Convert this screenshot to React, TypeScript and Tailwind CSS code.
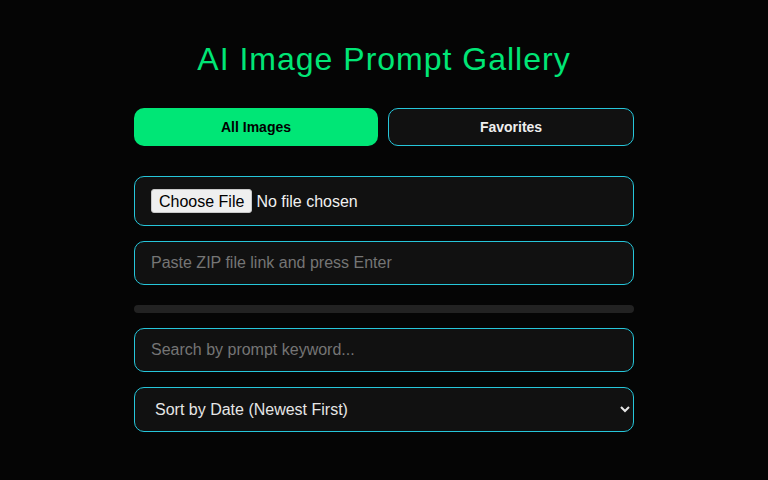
import React, { useState } from 'react';

// Simple gallery control panel: tabs, upload, link, progress, search and sort
export default function App() {
  const [tab, setTab] = useState<'all' | 'fav'>('all');
  const [query, setQuery] = useState('');
  const [link, setLink] = useState('');
  const [sort, setSort] = useState('date-desc');

  const box =
    'w-full rounded-[10px] border border-[#26c6da] bg-[#111111] text-[16px] text-[#e6e6e6] outline-none';

  return (
    <div
      className="min-h-[480px] bg-[#050505] flex flex-col items-center pt-[41px]"
      style={{ fontFamily: '"Liberation Sans", Arial, sans-serif' }}
    >
      <h1 className="text-[32px] leading-[37px] tracking-[1px] text-[#00e676] font-normal">
        AI Image Prompt Gallery
      </h1>

      <div className="w-[500px] mt-[30px] flex flex-col">
        {/* tabs */}
        <div className="flex gap-[10px]">
          <button
            onClick={() => setTab('all')}
            className={`flex-1 h-[38px] rounded-[10px] text-[14px] font-bold ${
              tab === 'all'
                ? 'bg-[#00e676] text-black'
                : 'bg-[#111111] text-[#eeeeee] border border-[#26c6da]'
            }`}
          >
            All Images
          </button>
          <button
            onClick={() => setTab('fav')}
            className={`flex-1 h-[38px] rounded-[10px] text-[14px] font-bold ${
              tab === 'fav'
                ? 'bg-[#00e676] text-black'
                : 'bg-[#111111] text-[#eeeeee] border border-[#26c6da]'
            }`}
          >
            Favorites
          </button>
        </div>

        {/* upload */}
        <div className={`${box} mt-[30px] h-[50px] px-4 flex items-center`}>
          <input
            type="file"
            accept=".zip"
            className="text-[16px] text-[#f0f0f0] file:bg-[#efefef] file:text-black file:border file:border-[#c8c8c8] file:rounded-[3px] file:px-[7px] file:h-[24px] file:mr-[4px]"
          />
        </div>

        <input
          value={link}
          onChange={(e) => setLink(e.target.value)}
          placeholder="Paste ZIP file link and press Enter"
          className={`${box} mt-[15px] h-[44px] px-4 placeholder:text-[#757575]`}
        />

        {/* progress */}
        <div className="mt-[20px] h-[8px] w-full rounded-full bg-[#222222] overflow-hidden">
          <div className="h-full bg-[#00e676]" style={{ width: '0%' }} />
        </div>

        <input
          value={query}
          onChange={(e) => setQuery(e.target.value)}
          placeholder="Search by prompt keyword..."
          className={`${box} mt-[15px] h-[44px] px-4 placeholder:text-[#757575]`}
        />

        <select
          value={sort}
          onChange={(e) => setSort(e.target.value)}
          className={`${box} mt-[15px] h-[45px] px-4`}
        >
          <option value="date-desc">Sort by Date (Newest First)</option>
          <option value="date-asc">Sort by Date (Oldest First)</option>
          <option value="prompt">Sort by Prompt (A-Z)</option>
        </select>
      </div>
    </div>
  );
}
